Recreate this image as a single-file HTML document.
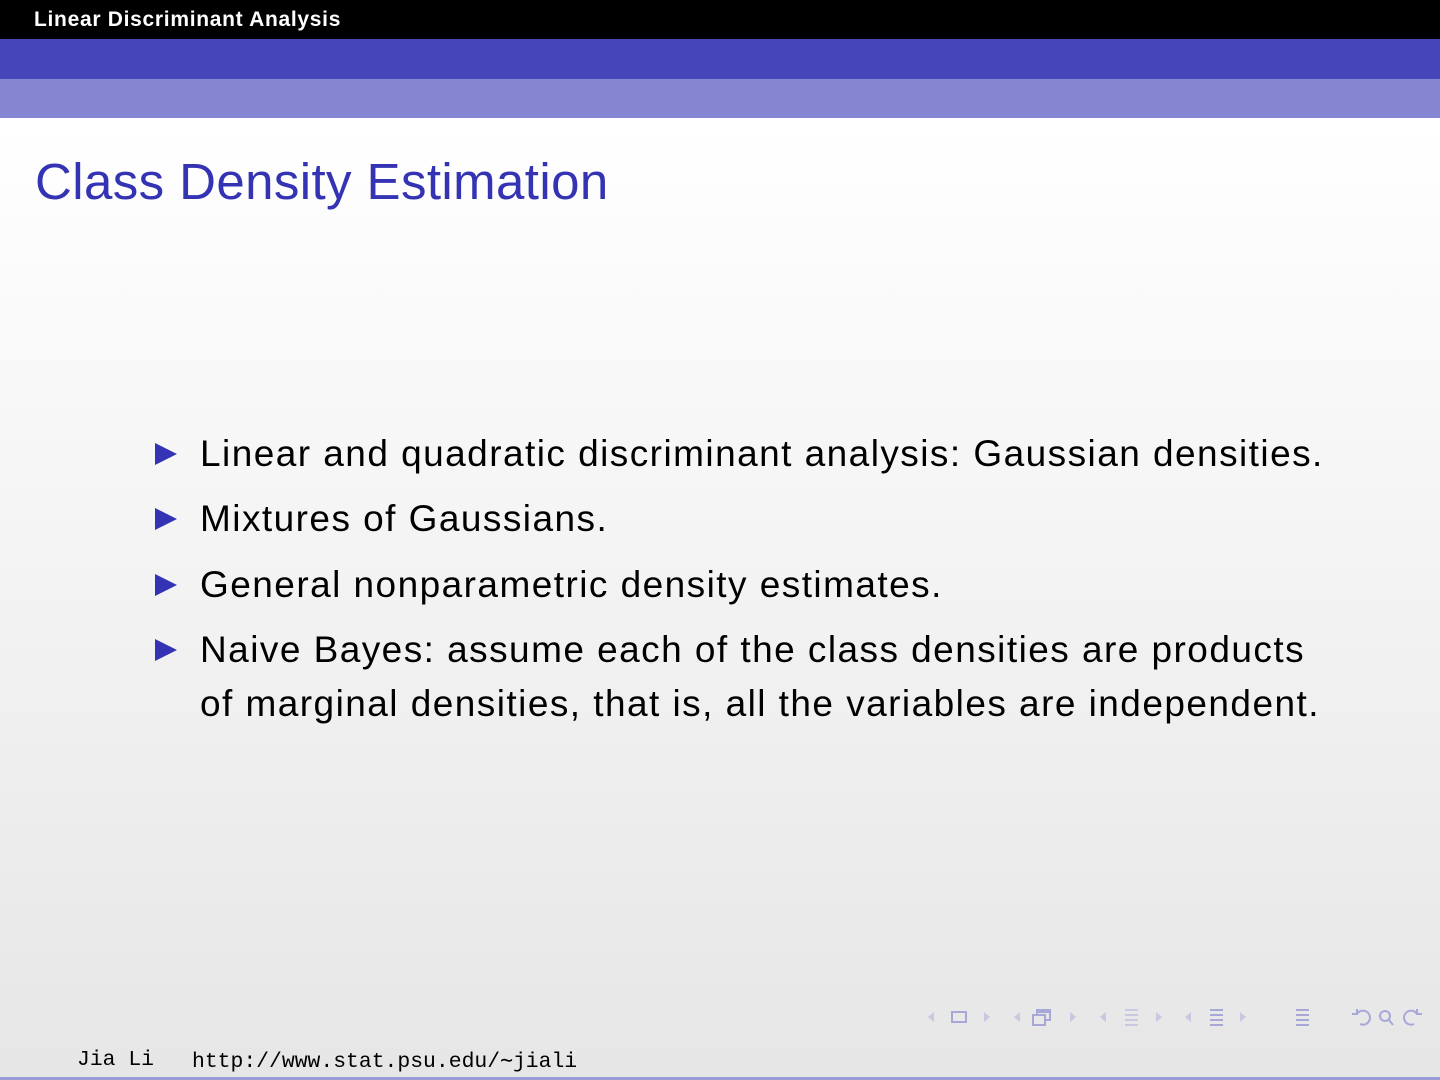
<!DOCTYPE html>
<html><head><style>
body{margin:0;width:1440px;height:1080px;overflow:hidden;position:relative;font-family:"Liberation Sans",sans-serif;background:linear-gradient(#ffffff 118px,#ffffff 120px,#e6e6e6 1080px);}
.top{position:absolute;left:0;top:0;width:1440px;height:39px;background:#000;color:#fff;font-weight:bold;font-size:21px;line-height:39px;letter-spacing:0.7px}
.top span{position:absolute;left:34px;top:0}
.b1{position:absolute;top:39px;left:0;width:1440px;height:40px;background:#4646b9}
.b2{position:absolute;top:79px;left:0;width:1440px;height:39px;background:#8585d2}
h1{position:absolute;left:35px;top:152px;margin:0;font-weight:normal;font-size:51px;color:#3333b3;letter-spacing:0.4px}
.it{position:absolute;left:200px;font-size:37px;color:#000;line-height:54px;letter-spacing:1.45px;white-space:nowrap}
.tri{position:absolute;left:155px;width:0;height:0;border-left:22px solid #3333b3;border-top:11px solid transparent;border-bottom:11px solid transparent}
.foot{position:absolute;top:1048px;font-family:"Liberation Mono",monospace;font-size:21.4px;color:#000}
.line{position:absolute;left:0;top:1077px;width:1440px;height:3px;background:#9b9bd6}
.nav{position:absolute;left:920px;top:1004px}
</style></head><body>
<div class="top"><span>Linear Discriminant Analysis</span></div>
<div class="b1"></div><div class="b2"></div>
<h1>Class Density Estimation</h1>
<div class="tri" style="top:443px"></div>
<div class="it" style="top:427px">Linear and quadratic discriminant analysis: Gaussian densities.</div>
<div class="tri" style="top:508px"></div>
<div class="it" style="top:492px">Mixtures of Gaussians.</div>
<div class="tri" style="top:574px"></div>
<div class="it" style="top:558px">General nonparametric density estimates.</div>
<div class="tri" style="top:639px"></div>
<div class="it" style="top:623px">Naive Bayes: assume each of the class densities are products<br>of marginal densities, that is, all the variables are independent.</div>
<div class="foot" style="left:77px">Jia Li</div>
<div class="foot" style="left:192px">http://www.stat.psu.edu/∼jiali</div>
<div class="line"></div>
<svg class="nav" width="520" height="30" viewBox="0 0 520 30" fill="none" stroke="#a8a8d8" stroke-width="2">
<path d="M14 8 L8 13 L14 18Z" fill="#c8c8e0" stroke="none"/>
<rect x="32" y="8" width="14" height="10"/>
<path d="M64 8 L70 13 L64 18Z" fill="#c8c8e0" stroke="none"/>
<path d="M100 8 L94 13 L100 18Z" fill="#c8c8e0" stroke="none"/>
<rect x="113" y="11" width="12" height="10"/><path d="M117 11 V6 H130 V16 H125 M117 8 H130"/>
<path d="M150 8 L156 13 L150 18Z" fill="#c8c8e0" stroke="none"/>
<path d="M186 8 L180 13 L186 18Z" fill="#c8c8e0" stroke="none"/>
<path d="M205 6H218M205 11H218M205 16H218M205 21H218" stroke="#c8c8e0"/>
<path d="M236 8 L242 13 L236 18Z" fill="#c8c8e0" stroke="none"/>
<path d="M271 8 L265 13 L271 18Z" fill="#c8c8e0" stroke="none"/>
<path d="M290 6H303M290 11H303M290 16H303M290 21H303"/>
<path d="M320 8 L326 13 L320 18Z" fill="#c8c8e0" stroke="none"/>
<path d="M376 6H389M376 11H389M376 16H389M376 21H389"/>
<path d="M437 10 A7 7 0 1 1 440 20 M432 10 L437 10 L437 5"/>
<circle cx="465" cy="12" r="5"/><path d="M469 16 L473 21"/>
<path d="M497 10 A7 7 0 1 0 494 20 M502 10 L497 10 L497 5"/>
</svg>
</body></html>
